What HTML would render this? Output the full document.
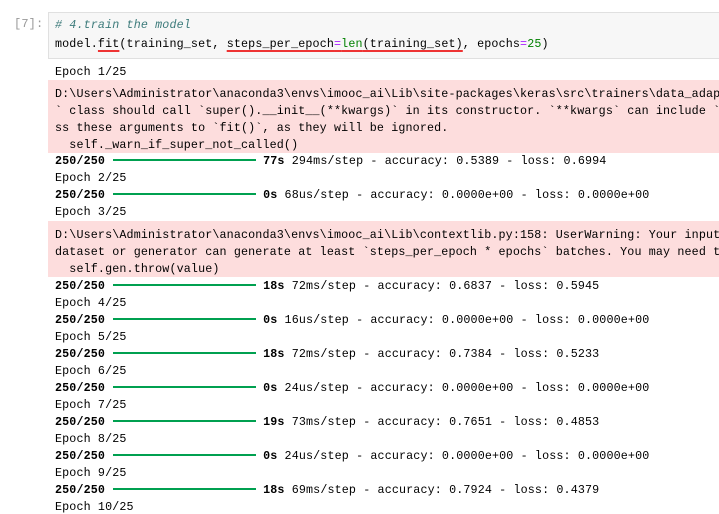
<!DOCTYPE html>
<html><head><meta charset="utf-8"><style>
html,body{margin:0;width:719px;height:514px;overflow:hidden}
body{background:#fff;position:relative;font-family:"Liberation Mono",monospace;font-size:11.7px;letter-spacing:0.14px;color:#000}
.l{position:absolute;left:55px;right:0;overflow:hidden;white-space:pre;line-height:17px;height:17px}
.p{position:absolute;left:14px;top:17px;color:#999;font-size:12px}
.in{position:absolute;left:48px;top:12px;right:0;height:45px;background:#f7f7f7;border:1px solid #e0e0e0;border-right:none}
.err{position:absolute;left:48px;right:0;background:#fddddd}
b{font-weight:bold}
.bar{display:inline-block;width:143px;height:2px;background:#00a050;vertical-align:middle;margin:0 7px 0 8px;position:relative;top:-1px}
.c{color:#3d7b7b;font-style:italic}.g{color:#008000}.o{color:#aa22ff}
.u{text-decoration:underline;text-decoration-color:#e33;text-underline-offset:3px;text-decoration-thickness:2px}
</style></head><body>
<div class="p">[7]:</div>
<div class="in"></div>
<div class="l" style="top:17px"><span class="c"># 4.train the model</span></div>
<div class="l" style="top:36px">model.<span class="u">fit</span>(training_set, <span class="u">steps_per_epoch<span class="o">=</span><span class="g">len</span>(training_set)</span>, epochs<span class="o">=</span><span class="g">25</span>)</div>
<div class="l" style="top:64px">Epoch 1/25</div>
<div class="err" style="top:80px;height:73px"></div>
<div class="l" style="top:86px">D:\Users\Administrator\anaconda3\envs\imooc_ai\Lib\site-packages\keras\src\trainers\data_adapters</div>
<div class="l" style="top:103px">` class should call `super().__init__(**kwargs)` in its constructor. `**kwargs` can include `work</div>
<div class="l" style="top:120px">ss these arguments to `fit()`, as they will be ignored.</div>
<div class="l" style="top:137px">  self._warn_if_super_not_called()</div>
<div class="l" style="top:153px"><b>250/250</b><span class="bar"></span><b>77s</b> 294ms/step - accuracy: 0.5389 - loss: 0.6994</div>
<div class="l" style="top:170px">Epoch 2/25</div>
<div class="l" style="top:187px"><b>250/250</b><span class="bar"></span><b>0s</b> 68us/step - accuracy: 0.0000e+00 - loss: 0.0000e+00</div>
<div class="l" style="top:204px">Epoch 3/25</div>
<div class="err" style="top:221px;height:56px"></div>
<div class="l" style="top:227px">D:\Users\Administrator\anaconda3\envs\imooc_ai\Lib\contextlib.py:158: UserWarning: Your input ran</div>
<div class="l" style="top:244px">dataset or generator can generate at least `steps_per_epoch * epochs` batches. You may need to use</div>
<div class="l" style="top:261px">  self.gen.throw(value)</div>
<div class="l" style="top:278px"><b>250/250</b><span class="bar"></span><b>18s</b> 72ms/step - accuracy: 0.6837 - loss: 0.5945</div>
<div class="l" style="top:295px">Epoch 4/25</div>
<div class="l" style="top:312px"><b>250/250</b><span class="bar"></span><b>0s</b> 16us/step - accuracy: 0.0000e+00 - loss: 0.0000e+00</div>
<div class="l" style="top:329px">Epoch 5/25</div>
<div class="l" style="top:346px"><b>250/250</b><span class="bar"></span><b>18s</b> 72ms/step - accuracy: 0.7384 - loss: 0.5233</div>
<div class="l" style="top:363px">Epoch 6/25</div>
<div class="l" style="top:380px"><b>250/250</b><span class="bar"></span><b>0s</b> 24us/step - accuracy: 0.0000e+00 - loss: 0.0000e+00</div>
<div class="l" style="top:397px">Epoch 7/25</div>
<div class="l" style="top:414px"><b>250/250</b><span class="bar"></span><b>19s</b> 73ms/step - accuracy: 0.7651 - loss: 0.4853</div>
<div class="l" style="top:431px">Epoch 8/25</div>
<div class="l" style="top:448px"><b>250/250</b><span class="bar"></span><b>0s</b> 24us/step - accuracy: 0.0000e+00 - loss: 0.0000e+00</div>
<div class="l" style="top:465px">Epoch 9/25</div>
<div class="l" style="top:482px"><b>250/250</b><span class="bar"></span><b>18s</b> 69ms/step - accuracy: 0.7924 - loss: 0.4379</div>
<div class="l" style="top:499px">Epoch 10/25</div>
</body></html>
